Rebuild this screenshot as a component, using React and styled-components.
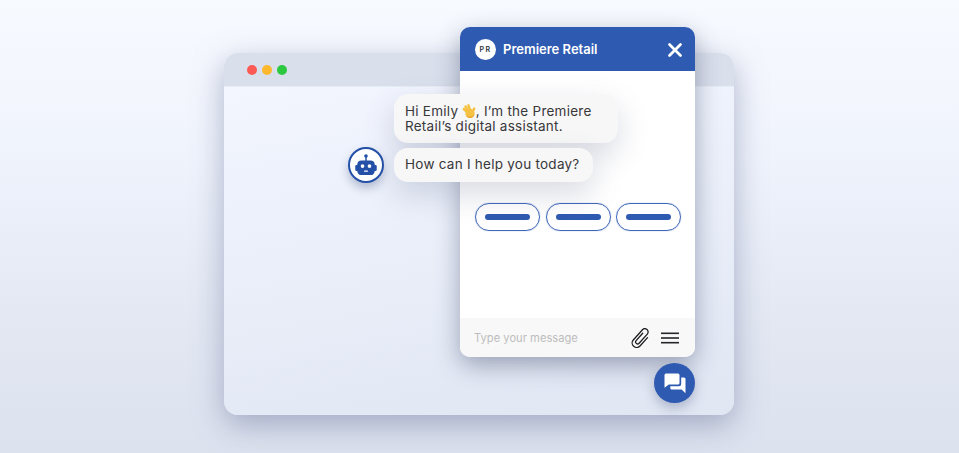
import React from 'react';
import styled, { createGlobalStyle } from 'styled-components';
import { X } from 'lucide-react';

const GlobalStyle = createGlobalStyle`
html, body {
  margin: 0;
  padding: 0;
  overflow: hidden;
}
body {
  font-family: Inter, "Liberation Sans", sans-serif;
}
`;

const Page = styled.div`
width: 959px;
height: 453px;
box-sizing: border-box;
padding: 53px 225px 38px 224px;
background: linear-gradient(180deg, #f7faff 0%, #eff3fc 35%, #e3e8f3 70%, #dce2ee 100%);
overflow: hidden;
`;

const BrowserWindow = styled.div`
position: relative;
height: 100%;
display: flex;
flex-direction: column;
border-radius: 14px;
background: linear-gradient(170deg, #f4f7ff 0%, #e9eef9 55%, #e0e6f2 100%);
box-shadow: 0 10px 30px rgba(105, 115, 155, 0.5);
`;

const TitleBar = styled.div`
height: 34px;
box-sizing: border-box;
display: flex;
align-items: center;
gap: 5px;
padding-left: 23px;
background: #d9dfeb;
border-radius: 14px 14px 0 0;
border-bottom: 1px solid #e8ecf6;
`;

const Dot = styled.span`
width: 10px;
height: 10px;
border-radius: 50%;
background: ${p => p.$color};
`;

const ChatColumn = styled.div`
position: absolute;
top: -26px;
left: 236px;
width: 235px;
display: flex;
flex-direction: column;
align-items: flex-end;
gap: 6px;
`;

const ChatPanel = styled.div`
width: 100%;
height: 330px;
display: flex;
flex-direction: column;
border-radius: 10px;
background: #ffffff;
overflow: hidden;
box-shadow: 0 8px 24px rgba(60, 70, 105, 0.45);
`;

const ChatHeader = styled.div`
height: 44px;
flex-shrink: 0;
box-sizing: border-box;
display: flex;
align-items: center;
padding: 0 9px 0 15px;
background: #2f5ab1;
color: #ffffff;
`;

const Logo = styled.div`
width: 21px;
height: 21px;
display: flex;
align-items: center;
justify-content: center;
margin-right: 7px;
border-radius: 50%;
background: #ffffff;
color: #2b2f3a;
font-size: 7px;
font-weight: 600;
letter-spacing: 1.4px;
`;

const Brand = styled.div`
flex: 1;
font-size: 13px;
font-weight: 600;
`;

const CloseIcon = styled(X)`
margin-top: 2px;
`;

const ChatBody = styled.div`
flex: 1;
display: flex;
justify-content: space-between;
padding: 132px 14px 0 15px;
`;

const Pill = styled.div`
width: 65px;
height: 28px;
box-sizing: border-box;
display: flex;
align-items: center;
justify-content: center;
border: 1px solid #3f67b8;
border-radius: 14px;
box-shadow: 0 0 1px rgba(63, 103, 184, 0.7);
`;

const PillBar = styled.span`
width: 45px;
height: 6px;
border-radius: 3px;
background: #2f5ab1;
`;

const ChatFooter = styled.div`
height: 39px;
flex-shrink: 0;
box-sizing: border-box;
display: flex;
align-items: center;
padding: 0 16px 0 14px;
background: #f8f8f8;
`;

const Placeholder = styled.div`
flex: 1;
font-size: 11.2px;
color: #bdbdbd;
`;

const FooterIcons = styled.div`
display: flex;
align-items: center;
gap: 10px;
`;

const Fab = styled.div`
width: 41px;
height: 40px;
display: flex;
align-items: center;
justify-content: center;
border-radius: 50%;
background: #2f5ab1;
box-shadow: 0 5px 12px rgba(70, 85, 130, 0.35);
`;

const Conversation = styled.div`
position: absolute;
top: 41px;
left: 124px;
display: grid;
grid-template-columns: 36px auto;
grid-template-rows: 48px 34px;
column-gap: 10px;
row-gap: 6px;
justify-items: start;
align-items: center;
`;

const Bubble = styled.div`
grid-column: 2;
box-sizing: border-box;
padding: ${p => (p.$wide ? '9px 26px 9px 11px' : '9px 13px 10px 11px')};
border-radius: 14px;
background: #f7f7f7;
color: #38383b;
font-size: 13.5px;
line-height: 15px;
letter-spacing: 0.25px;
white-space: nowrap;
box-shadow: 0 12px 30px rgba(90, 100, 135, 0.24);
`;

const Avatar = styled.div`
grid-column: 1;
width: 36px;
height: 36px;
flex-shrink: 0;
box-sizing: border-box;
display: flex;
align-items: center;
justify-content: center;
border: 2px solid #2450a8;
border-radius: 50%;
background: #ffffff;
box-shadow: 0 5px 10px rgba(70, 85, 130, 0.35);
`;

const Wave = styled.svg`
width: 16px;
height: 16px;
margin: 0 -1.5px 0 -1px;
vertical-align: -3px;
`;

const WaveIcon = () => (
  <Wave viewBox="0 0 16 16">
    <g stroke="#f6c244" strokeWidth="2.5" strokeLinecap="round" fill="none">
      <path d="M6 9 2.8 6" />
      <path d="M7 7.5 4.5 3.5" />
      <path d="M9 7 7.4 2.4" />
      <path d="M11.5 9 13.2 5.6" />
    </g>
    <circle cx="9" cy="10.4" r="4.6" fill="#f6c244" />
    <path d="M5 12.5c1 1.8 3.4 2.9 5.6 2.2 2-.6 3-2.4 3-4.2-1 2.2-2.8 3.3-4.6 3.2-1.500-.1-2.900-.5-4-1.200z" fill="#e8a52f" />
  </Wave>
);

const RobotIcon = () => (
  <svg width="22" height="22" viewBox="0 0 24 24">
    <circle cx="12" cy="2.2" r="2" fill="#2450a8" />
    <rect x="11.2" y="2" width="1.6" height="6" fill="#2450a8" />
    <rect x="0.3" y="12" width="3.4" height="6.500" rx="1.400" fill="#2450a8" />
    <rect x="20.300" y="12" width="3.400" height="6.500" rx="1.400" fill="#2450a8" />
    <rect x="2.500" y="7" width="19" height="16" rx="4.500" fill="#2450a8" />
    <ellipse cx="8.200" cy="13.200" rx="2" ry="2.100" fill="#ffffff" />
    <ellipse cx="15.800" cy="13.200" rx="2" ry="2.100" fill="#ffffff" />
    <rect x="9.800" y="18" width="4.400" height="1.400" rx="0.700" fill="#ffffff" />
  </svg>
);

const ClipIcon = () => (
  <svg width="20" height="20" viewBox="0 0 20 20" fill="none" stroke="#1f1f22" strokeWidth="1.3" strokeLinecap="round">
    <g transform="translate(10 10) rotate(42) translate(-5.5 -11.5) scale(1 0.98)">
      <path d="M3.600 7V17a2 2 0 0 0 4 0V4.500a3.250 3.250 0 0 0-6.500 0V18.500a4.500 4.500 0 0 0 9 0V7" />
    </g>
  </svg>
);

const MenuIcon = () => (
  <svg width="18" height="12" viewBox="0 0 18 12" fill="#26262a">
    <rect y="0.500" width="18" height="1.600" />
    <rect y="5.200" width="18" height="1.600" />
    <rect y="9.900" width="18" height="1.600" />
  </svg>
);

const ChatsIcon = () => (
  <svg width="22" height="21" viewBox="0 0 22 21" fill="#ffffff">
    <path d="M2 0.500h12a1.500 1.500 0 0 1 1.500 1.500v8a1.500 1.500 0 0 1-1.500 1.500H4.800L0.500 14.800V2A1.500 1.500 0 0 1 2 0.500z" />
    <path d="M17.200 4.500H20a1.500 1.500 0 0 1 1.500 1.500v14.200L17.600 16.500H7.800A1.500 1.500 0 0 1 6.300 15v-1.700h8.700a2.200 2.200 0 0 0 2.200-2.200z" />
  </svg>
);

const App = () => {
  return (
    <Page>
      <GlobalStyle />
      <BrowserWindow>
        <TitleBar>
          <Dot $color="#fb5a55" />
          <Dot $color="#fdb82e" />
          <Dot $color="#2bc840" />
        </TitleBar>
        <ChatColumn>
          <ChatPanel>
            <ChatHeader>
              <Logo>PR</Logo>
              <Brand>Premiere Retail</Brand>
              <CloseIcon size={22} strokeWidth={3} color="#ffffff" />
            </ChatHeader>
            <ChatBody>
              <Pill><PillBar /></Pill>
              <Pill><PillBar /></Pill>
              <Pill><PillBar /></Pill>
            </ChatBody>
            <ChatFooter>
              <Placeholder>Type your message</Placeholder>
              <FooterIcons>
                <ClipIcon />
                <MenuIcon />
              </FooterIcons>
            </ChatFooter>
          </ChatPanel>
          <Fab>
            <ChatsIcon />
          </Fab>
        </ChatColumn>
        <Conversation>
          <Bubble $wide>
            Hi Emily <WaveIcon />, I’m the Premiere<br />Retail’s digital assistant.
          </Bubble>
          <Avatar>
            <RobotIcon />
          </Avatar>
          <Bubble>How can I help you today?</Bubble>
        </Conversation>
      </BrowserWindow>
    </Page>
  );
};

export default App;
